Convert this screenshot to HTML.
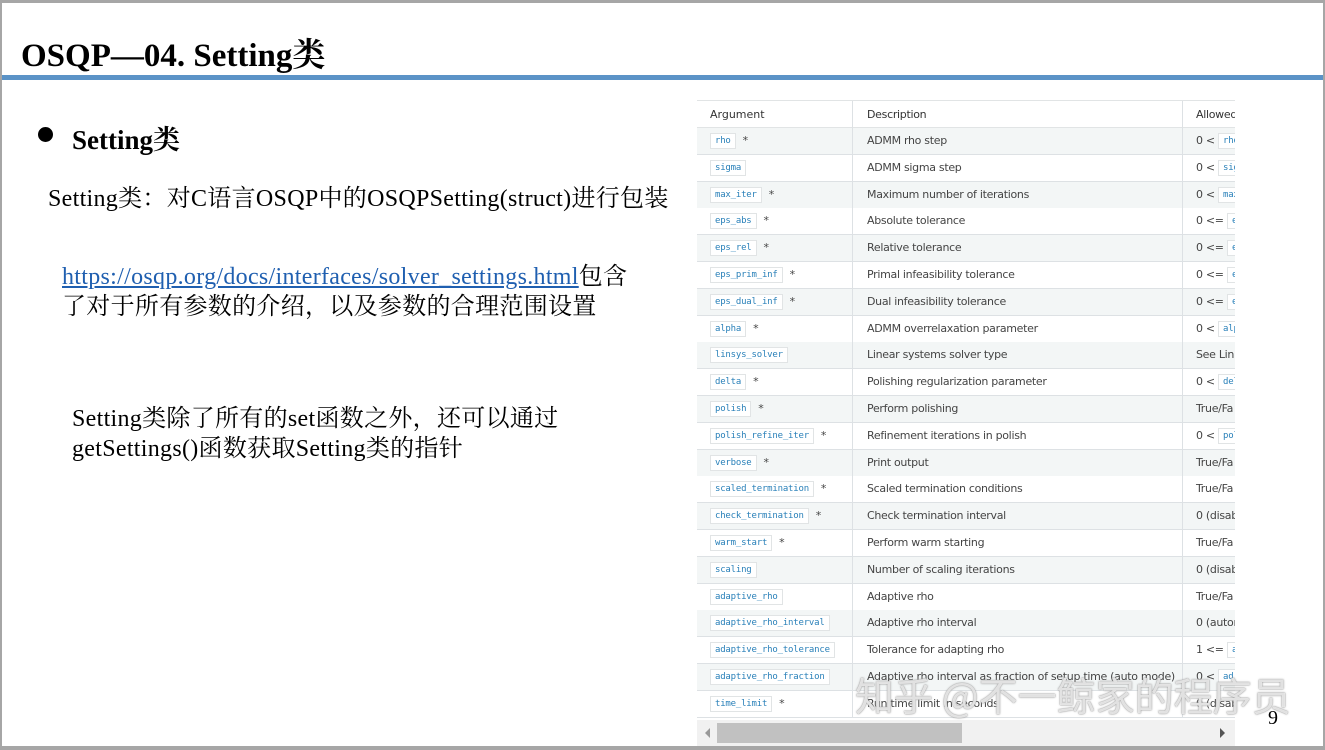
<!DOCTYPE html>
<html><head><meta charset="utf-8"><style>
*{margin:0;padding:0;box-sizing:border-box}
body{width:1325px;height:750px;background:#a6a6a6;position:relative;overflow:hidden;font-family:"Liberation Serif","Noto Serif CJK SC",serif}
#slide{position:absolute;left:2px;top:3px;width:1321px;height:743px;background:#fff;overflow:hidden}
.t{position:absolute;white-space:nowrap;color:#000}
#bar{position:absolute;left:0;top:72px;width:1321px;height:5px;background:#5b93c7}
#tbl{position:absolute;left:695px;top:94px;width:538px;height:649px;background:#fff;overflow:hidden;font-family:"DejaVu Sans",sans-serif;font-size:11px;color:#444}
.row{position:absolute;left:0;width:538px;height:27px;border-bottom:1px solid #dde1e4}
.c{position:absolute;top:0;height:26px;line-height:26px;white-space:nowrap;overflow:hidden}
.c1{left:0;width:156px;padding-left:13px;border-right:1px solid #dde1e4}
.c2{left:156px;width:330px;padding-left:14px;border-right:1px solid #dde1e4;letter-spacing:-0.3px}
.c3{left:486px;width:60px;padding-left:13px;letter-spacing:-0.3px}
code{font-family:"DejaVu Sans Mono",monospace;font-size:9px;color:#2980b9;border:1px solid #e1e4e5;background:#fff;padding:2px 4px;letter-spacing:-0.2px;vertical-align:middle}
.b{font-size:24px;letter-spacing:0.3px}
</style></head><body><div id="slide">
<div class="t" style="left:19px;top:26px;font-size:33px;font-weight:bold;letter-spacing:0px">OSQP—04. Setting类</div>
<div id="bar"></div>
<div style="position:absolute;left:36px;top:124px;width:15px;height:15px;border-radius:50%;background:#000"></div>
<div class="t" style="left:70px;top:115px;font-size:27px;font-weight:bold">Setting类</div>
<div class="t b" style="left:46px;top:175px">Setting类：对C语言OSQP中的OSQPSetting(struct)进行包装</div>
<div class="t b" style="left:60px;top:253px"><span style="color:#1f5fb0;text-decoration:underline">https://osqp.org/docs/interfaces/solver_settings.html</span>包含</div>
<div class="t b" style="left:60px;top:283px">了对于所有参数的介绍，以及参数的合理范围设置</div>
<div class="t b" style="left:70px;top:395px">Setting类除了所有的set函数之外，还可以通过</div>
<div class="t b" style="left:70px;top:425px">getSettings()函数获取Setting类的指针</div>
<div id="tbl">
<div class="row" style="top:3px;height:29px;border-top:1px solid #e1e4e5;border-bottom:2px solid #e1e4e5"><div class="c c1" style="height:28px;line-height:28px;color:#333">Argument</div><div class="c c2" style="height:28px;line-height:28px;color:#333">Description</div><div class="c c3" style="height:28px;line-height:28px;color:#333">Allowed</div></div>
<div id="rows"></div>
<div style="position:absolute;left:0;top:623px;width:538px;height:26px;background:#f1f1f1">
<div style="position:absolute;left:8px;top:8px;border-right:5px solid #999;border-top:5px solid transparent;border-bottom:5px solid transparent"></div>
<div style="position:absolute;left:20px;top:3px;width:245px;height:20px;background:#c1c1c1"></div>
<div style="position:absolute;left:523px;top:8px;border-left:5px solid #555;border-top:5px solid transparent;border-bottom:5px solid transparent"></div>
</div>
</div>
<div class="t" style="left:853px;top:664px;font-family:'Noto Sans CJK SC',sans-serif;font-size:39px;color:rgba(255,255,255,0.75);text-shadow:0 0 1px #888,0 0 2px #aaa">知乎 @不一鲸家的程序员</div>
<div class="t" style="left:1266px;top:704px;font-size:20px">9</div>
</div>
<script>
(function(){
var d=[["rho",1,"ADMM rho step","0 < ","rho"],["sigma",0,"ADMM sigma step","0 < ","sig"],["max_iter",1,"Maximum number of iterations","0 < ","max"],["eps_abs",1,"Absolute tolerance","0 <= ","ep"],["eps_rel",1,"Relative tolerance","0 <= ","ep"],["eps_prim_inf",1,"Primal infeasibility tolerance","0 <= ","ep"],["eps_dual_inf",1,"Dual infeasibility tolerance","0 <= ","ep"],["alpha",1,"ADMM overrelaxation parameter","0 < ","alp"],["linsys_solver",0,"Linear systems solver type","See Lin",""],["delta",1,"Polishing regularization parameter","0 < ","del"],["polish",1,"Perform polishing","True/Fa",""],["polish_refine_iter",1,"Refinement iterations in polish","0 < ","pol"],["verbose",1,"Print output","True/Fa",""],["scaled_termination",1,"Scaled termination conditions","True/Fa",""],["check_termination",1,"Check termination interval","0 (disab",""],["warm_start",1,"Perform warm starting","True/Fa",""],["scaling",0,"Number of scaling iterations","0 (disab",""],["adaptive_rho",0,"Adaptive rho","True/Fa",""],["adaptive_rho_interval",0,"Adaptive rho interval","0 (autom",""],["adaptive_rho_tolerance",0,"Tolerance for adapting rho","1 <= ","ad"],["adaptive_rho_fraction",0,"Adaptive rho interval as fraction of setup time (auto mode)","0 < ","ad."],["time_limit",1,"Run time limit in seconds","0 (disab",""]];
var h="";for(var i=0;i<d.length;i++){var r=d[i];var yy=Math.round(31+i*26.8);
h+='<div class="row" style="top:'+yy+'px;background:'+(i%2==0?'#f3f6f6':'#fff')+'"><div class="c c1"><code>'+r[0]+'</code>'+(r[1]?' &nbsp;*':'')+'</div><div class="c c2">'+r[2]+'</div><div class="c c3">'+r[3]+(r[4]?'<code>'+r[4]+'</code>':'')+'</div></div>';}
document.getElementById('rows').innerHTML=h;
})();
</script>
</body></html>
